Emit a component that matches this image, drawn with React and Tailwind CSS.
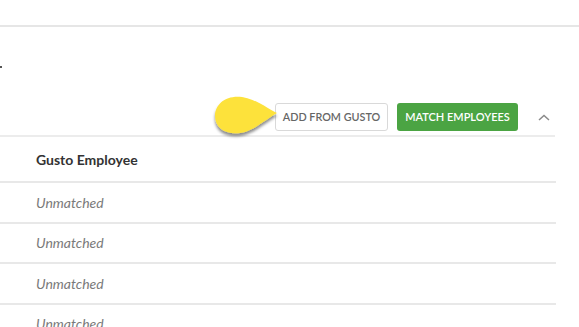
import React from "react";

function Callout() {
  return (
    <svg
      className="absolute left-[210px] top-[92px]"
      width="72"
      height="54"
      viewBox="0 0 72 54"
    >
      <defs>
        <filter id="sh" x="-20%" y="-20%" width="140%" height="160%">
          <feDropShadow dx="0" dy="3" stdDeviation="1.6" floodColor="#000" floodOpacity="0.45" />
        </filter>
      </defs>
      <path
        d="M67 21 C58 17 46 7 32 5 C16 3 5 12 5 24 C5 36 16 43 30 41 C44 39 56 27 67 21 Z"
        fill="#fde23b"
        filter="url(#sh)"
      />
    </svg>
  );
}

const rows = ["Unmatched", "Unmatched", "Unmatched", "Unmatched"];

export default function App() {
  return (
    <div className="relative w-[579px] h-[327px] overflow-hidden bg-white font-['Lato','Open_Sans',sans-serif]">
      <div className="h-[25px]" />
      <div className="h-[2px] bg-[#e6e6e6]" />
      <div className="h-[39px]" />
      <div className="h-[2px] w-[2px] bg-[#555]" />
      <div className="h-[35px]" />

      <div className="w-[555px] flex items-center justify-end">
        <button className="w-[113px] h-[28px] flex items-center justify-center border border-[#d9d9d9] rounded-[3px] bg-white text-[#666] text-[10.8px] font-semibold">
          ADD FROM GUSTO
        </button>
        <button className="ml-[9px] w-[121px] h-[28px] flex items-center justify-center rounded-[3px] bg-[#4ba443] text-white text-[11px] font-semibold">
          MATCH EMPLOYEES
        </button>
        <svg className="ml-[20px] mr-[5px]" width="12" height="7" viewBox="0 0 12 7">
          <path d="M1 6 L6 1.5 L11 6" fill="none" stroke="#8a8a8a" strokeWidth="1.5" />
        </svg>
      </div>

      <div className="mt-[4px] w-[555px] h-[2px] bg-[#ececec]" />
      <div className="w-[556px]">
        <div className="h-[46px] flex items-center pl-[36px] border-b-2 border-[#e8e8e8] text-[14px] font-bold text-[#333]">
          Gusto Employee
        </div>
        {rows.map((r, i) => (
          <div
            key={i}
            className="h-[40.5px] flex items-center pl-[36px] border-b-2 border-[#e8e8e8] text-[14px] italic text-[#7a7a7a]"
          >
            {r}
          </div>
        ))}
      </div>

      <Callout />
    </div>
  );
}
